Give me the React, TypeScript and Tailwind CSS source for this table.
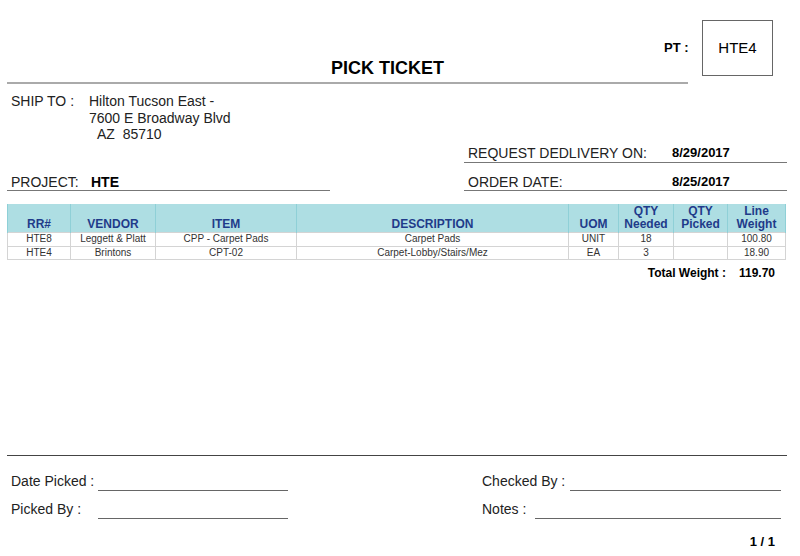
import React from 'react';

type Line = {
  rr: string;
  vendor: string;
  item: string;
  description: string;
  uom: string;
  needed: string;
  picked: string;
  weight: string;
};

const lines: Line[] = [
  { rr: 'HTE8', vendor: 'Leggett & Platt', item: 'CPP - Carpet Pads', description: 'Carpet Pads', uom: 'UNIT', needed: '18', picked: '', weight: '100.80' },
  { rr: 'HTE4', vendor: 'Brintons', item: 'CPT-02', description: 'Carpet-Lobby/Stairs/Mez', uom: 'EA', needed: '3', picked: '', weight: '18.90' },
];

function SignRow({ label, labelW, lineW }: { label: string; labelW: string; lineW: string }) {
  return (
    <div className="flex h-[28px] items-end">
      <span className={`${labelW} text-[14px] leading-[16px] pb-[2px] text-[#222]`}>{label}</span>
      <span className={`${lineW} h-full border-b border-[#666]`} />
    </div>
  );
}

export default function App() {
  const th = 'border-x border-[#8fd0d7] px-[2px] pb-[1px] align-bottom text-center text-[12px] leading-[13px] font-bold text-[#1f3b8a]';
  const td = 'border border-[#d4d4d4] px-[2px] h-[13.5px] text-center text-[10px] leading-[12px] text-[#333]';

  return (
    <div className="flex h-[556px] w-[800px] flex-col bg-white font-['Liberation_Sans',Arial,sans-serif] text-black">
      {/* Header */}
      <div className="flex items-start pt-[20px]">
        <div className="ml-[7px] flex h-[64px] w-[681px] items-end border-b-2 border-[#aaaaaa] pb-[3px] pl-[324px]">
          <h1 className="text-[18px] font-bold leading-[21px]">PICK TICKET</h1>
        </div>
        <div className="-ml-[24px] flex h-[56px] items-center">
          <span className="w-[38px] text-[13px] font-bold">PT :</span>
          <div className="flex h-[56px] w-[71px] items-center justify-center border border-[#666] text-[15px]">HTE4</div>
        </div>
      </div>

      {/* Ship to / dates */}
      <div className="flex items-end">
        <div className="ml-[7px] flex w-[323px] flex-col">
          <div className="flex pl-[4px] pt-[9px] text-[14px] leading-[16.5px] text-[#222]">
            <span className="w-[78px]">SHIP TO :</span>
            <div>
              <div>Hilton Tucson East -</div>
              <div>7600 E Broadway Blvd</div>
              <div className="pl-[8px]">AZ&nbsp;&nbsp;85710</div>
            </div>
          </div>
          <div className="mt-[20px] flex h-[28px] items-end border-b border-[#777] pl-[4px] text-[14px] leading-[16px]">
            <span className="w-[80px] text-[#222]">PROJECT:</span>
            <span className="font-bold">HTE</span>
          </div>
        </div>
        <div className="ml-auto mr-[13px] flex w-[323px] flex-col">
          <div className="flex h-[28px] items-end border-b border-[#777] pb-[1px] pl-[4px] leading-[16px]">
            <span className="w-[204px] text-[14px] text-[#222]">REQUEST DEDLIVERY ON:</span>
            <span className="text-[13px] font-bold">8/29/2017</span>
          </div>
          <div className="flex h-[28px] items-end border-b border-[#777] pl-[4px] leading-[16px]">
            <span className="w-[204px] text-[14px] text-[#222]">ORDER DATE:</span>
            <span className="text-[13px] font-bold">8/25/2017</span>
          </div>
        </div>
      </div>

      {/* Lines table */}
      <table className="ml-[7px] mt-[13px] w-[778px] table-fixed border-collapse">
        <colgroup>
          <col className="w-[63px]" />
          <col className="w-[85px]" />
          <col className="w-[141px]" />
          <col className="w-[272px]" />
          <col className="w-[50px]" />
          <col className="w-[55px]" />
          <col className="w-[54px]" />
          <col className="w-[58px]" />
        </colgroup>
        <thead>
          <tr className="h-[29px] bg-[#aedee3]">
            <th className={th}>RR#</th>
            <th className={th}>VENDOR</th>
            <th className={th}>ITEM</th>
            <th className={th}>DESCRIPTION</th>
            <th className={th}>UOM</th>
            <th className={th}>QTY<br />Needed</th>
            <th className={th}>QTY<br />Picked</th>
            <th className={th}>Line<br />Weight</th>
          </tr>
        </thead>
        <tbody>
          {lines.map(l => (
            <tr key={l.rr}>
              <td className={td}>{l.rr}</td>
              <td className={td}>{l.vendor}</td>
              <td className={td}>{l.item}</td>
              <td className={td}>{l.description}</td>
              <td className={td}>{l.uom}</td>
              <td className={td}>{l.needed}</td>
              <td className={td}>{l.picked}</td>
              <td className={td}>{l.weight}</td>
            </tr>
          ))}
        </tbody>
      </table>

      <div className="mr-[25px] mt-[6px] flex justify-end gap-[13px] text-[12px] font-bold leading-[14px]">
        <span>Total Weight :</span>
        <span>119.70</span>
      </div>

      {/* Sign-off */}
      <footer className="mt-auto">
        <div className="ml-[7px] mr-[13px] border-t border-[#444]" />
        <div className="flex pt-[7px]">
          <div className="w-[482px] pl-[11px]">
            <SignRow label="Date Picked :" labelW="w-[87px]" lineW="w-[190px]" />
            <SignRow label="Picked By :" labelW="w-[87px]" lineW="w-[190px]" />
          </div>
          <div>
            <SignRow label="Checked By :" labelW="w-[88px]" lineW="w-[211px]" />
            <SignRow label="Notes :" labelW="w-[53px]" lineW="w-[246px]" />
          </div>
        </div>
        <div className="mt-[15px] pb-[6px] pr-[25px] text-right text-[13px] font-bold leading-[16px]">1 / 1</div>
      </footer>
    </div>
  );
}
